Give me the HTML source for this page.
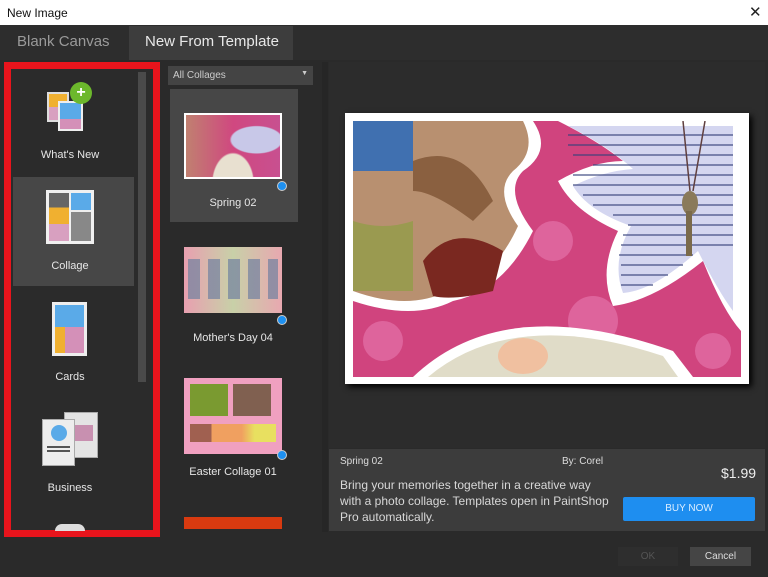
<!DOCTYPE html>
<html><head><style>
*{margin:0;padding:0;box-sizing:border-box}
body{width:768px;height:577px;background:#2a2a2a;font-family:"Liberation Sans",sans-serif;position:relative;overflow:hidden;color:#ddd}
.a{position:absolute}
.t{font-size:11px;color:#e6e6e6;text-align:center}
</style></head><body>
<div class="a" style="left:0;top:0;width:768px;height:25px;background:#fff"></div>
<div class="a" style="left:7px;top:6px;font-size:12px;color:#111">New Image</div>
<div class="a" style="left:749px;top:3px;font-size:15px;color:#222">✕</div>
<div class="a" style="left:0;top:25px;width:768px;height:35px;background:#2d2d2d"></div>
<div class="a" style="left:17px;top:33px;font-size:15px;color:#9a9a9a">Blank Canvas</div>
<div class="a" style="left:129px;top:26px;width:164px;height:34px;background:#3d3d3d"></div>
<div class="a" style="left:145px;top:33px;font-size:15px;color:#e8e8e8">New From Template</div>

<div class="a" style="left:4px;top:62px;width:156px;height:475px;border:7px solid #e8141c;background:#2b2b2b"></div>
<div class="a" style="left:138px;top:72px;width:8px;height:310px;background:#4a4a4a"></div>
<div class="a" style="left:47px;top:92px;width:22px;height:30px;background:#eee;border:2px solid #ddd"><div style="width:100%;height:100%;background:linear-gradient(#f0b030 50%,#d8a0c0 50%)"></div></div>
<div class="a" style="left:58px;top:101px;width:25px;height:30px;background:#eee;padding:2px"><div style="width:100%;height:60%;background:#5aaae8"></div><div style="width:100%;height:40%;background:#d490b8"></div></div>
<div class="a" style="left:70px;top:82px;width:22px;height:22px;border-radius:50%;background:#6cb82c;color:#fff;font-size:16px;line-height:22px;text-align:center;font-weight:bold">+</div>
<div class="a t" style="left:20px;top:149px;width:100px">What's New</div>
<div class="a" style="left:13px;top:177px;width:121px;height:109px;background:#474747"></div>
<div class="a" style="left:46px;top:190px;width:48px;height:54px;background:#f0f0f0;padding:3px;display:flex;gap:2px"><div style="flex:1;background:linear-gradient(#666 30%,#f0b030 30%,#f0b030 65%,#d8a0c0 65%)"></div><div style="flex:1;background:linear-gradient(#5aaae8 35%,#eee 35%,#eee 40%,#888 40%)"></div></div>
<div class="a t" style="left:20px;top:260px;width:100px">Collage</div>
<div class="a" style="left:52px;top:302px;width:35px;height:54px;background:#eee;padding:3px"><div style="height:45%;background:#5aaae8"></div><div style="height:55%;background:linear-gradient(90deg,#f0b030 35%,#d490b8 35%)"></div></div>
<div class="a t" style="left:20px;top:371px;width:100px">Cards</div>
<div class="a" style="left:64px;top:412px;width:34px;height:46px;background:#e4e4e4;border:1px solid #aaa"><div style="margin:12px 4px;height:16px;background:#c890b0"></div></div>
<div class="a" style="left:42px;top:419px;width:33px;height:47px;background:#ededed;border:1px solid #aaa"><div style="margin:5px 8px;width:16px;height:16px;border-radius:50%;background:#5aaae8"></div><div style="margin:2px 4px;height:8px;background:repeating-linear-gradient(#555 0 2px,#eee 2px 4px)"></div></div>
<div class="a t" style="left:20px;top:482px;width:100px">Business</div>
<div class="a" style="left:55px;top:524px;width:30px;height:7px;border-radius:15px 15px 0 0;background:#ddd"></div>

<div class="a" style="left:168px;top:66px;width:145px;height:19px;background:#444;font-size:10px;color:#ccc;padding:4px 5px">All Collages<span style="float:right;font-size:7px">▼</span></div>
<div class="a" style="left:170px;top:89px;width:128px;height:133px;background:#474747"></div>
<div class="a" style="left:184px;top:113px;width:98px;height:66px;background:#fff;padding:2px"><div style="width:100%;height:100%;background:radial-gradient(ellipse at 75% 40%,#c8c8e8 25%,transparent 27%),radial-gradient(ellipse at 50% 110%,#e8e0d0 30%,transparent 32%),linear-gradient(90deg,#c08070,#d04880 50%,#c85090)"></div></div>
<div class="a" style="left:277px;top:181px;width:10px;height:10px;border-radius:50%;background:#1e90f0;border:1px solid #ccc"></div>
<div class="a t" style="left:184px;top:197px;width:98px">Spring 02</div>
<div class="a" style="left:184px;top:247px;width:98px;height:66px;background:linear-gradient(90deg,#e8a0b0,#c8d0a8,#e8a8b0)"><div style="margin:12px 4px;height:40px;background:repeating-linear-gradient(90deg,#7080a0 0 12px,transparent 12px 20px);opacity:.7"></div></div>
<div class="a" style="left:277px;top:315px;width:10px;height:10px;border-radius:50%;background:#1e90f0;border:1px solid #ccc"></div>
<div class="a t" style="left:184px;top:332px;width:98px">Mother's Day 04</div>
<div class="a" style="left:184px;top:378px;width:98px;height:76px;background:#f0a0c0;padding:6px"><div style="display:flex;gap:5px"><div style="width:38px;height:32px;background:#7a9a30"></div><div style="width:38px;height:32px;background:#806050"></div></div><div style="margin-top:8px;height:18px;background:linear-gradient(90deg,#a06050 25%,#f0a060 25%,#f0a060 60%,#e8e060 75%)"></div></div>
<div class="a" style="left:277px;top:450px;width:10px;height:10px;border-radius:50%;background:#1e90f0;border:1px solid #ccc"></div>
<div class="a t" style="left:184px;top:466px;width:98px">Easter Collage 01</div>
<div class="a" style="left:184px;top:517px;width:98px;height:12px;background:#d83a10"></div>
<div class="a" style="left:322px;top:62px;width:6px;height:470px;background:#262626"></div>

<div class="a" style="left:329px;top:62px;width:436px;height:386px;background:#2c2c2c"></div>
<div class="a" style="left:345px;top:113px;width:404px;height:271px;background:#fff;box-shadow:3px 3px 6px #000"></div>
<svg class="a" style="left:353px;top:121px" width="388" height="256" viewBox="0 0 388 256">
<rect width="388" height="256" fill="#d0447e"/>
<g fill="#e87ab0" opacity=".6"><circle cx="200" cy="120" r="20"/><circle cx="240" cy="200" r="25"/><circle cx="30" cy="220" r="20"/><circle cx="360" cy="230" r="18"/></g>
<path d="M0 0H180Q200 30 170 50Q150 70 180 110Q150 170 100 180Q60 200 0 180Z" fill="#fff"/>
<path d="M0 0H170Q185 30 160 50Q140 70 165 105Q140 160 95 170Q55 190 0 170Z" fill="#b89070"/>
<path d="M0 0H60V50H0Z" fill="#4070b0"/>
<path d="M70 140Q100 100 150 130L140 170Q100 180 80 175Z" fill="#7a2820"/>
<path d="M60 40Q110 20 140 80L120 100Q80 70 60 70Z" fill="#8a6040"/>
<path d="M0 100Q30 110 60 100V170H0Z" fill="#9a9a50"/>
<path d="M205 0H388V210Q370 190 350 140Q300 180 260 185Q245 150 265 110Q220 90 205 60Q240 40 270 40Q245 20 205 0Z" fill="#fff"/>
<path d="M215 5H380V190Q365 170 345 130Q300 170 270 172Q258 140 278 105Q235 90 220 65Q250 50 280 48Q255 25 215 5Z" fill="#d4d6f0"/>
<g stroke="#34407a" stroke-width="1.5" opacity=".75"><path d="M215 14H380M215 24H380M220 34H380M240 44H380M220 54H380M220 64H380M230 74H380M240 84H380M260 94H380M275 104H380M270 114H380M268 124H380M266 134H340M268 144H330M268 154H315M268 164H300"/></g>
<path d="M330 0L337 70M352 0L340 70" stroke="#604040" stroke-width="1.5" fill="none"/>
<ellipse cx="337" cy="82" rx="8" ry="12" fill="#8a7a5a"/><rect x="333" y="90" width="6" height="45" fill="#7a6a4a"/>
<path d="M60 256Q150 170 320 230L340 256Z" fill="#fff"/>
<path d="M75 256Q160 185 310 235L325 256Z" fill="#e0dcc8"/>
<ellipse cx="170" cy="235" rx="25" ry="18" fill="#f0c0a0"/>
</svg>

<div class="a" style="left:329px;top:449px;width:436px;height:82px;background:#3c3c3c"></div>
<div class="a" style="left:340px;top:456px;font-size:10px;color:#ddd">Spring 02</div>
<div class="a" style="left:562px;top:456px;font-size:10px;color:#ddd">By: Corel</div>
<div class="a" style="left:721px;top:465px;font-size:14px;color:#eee">$1.99</div>
<div class="a" style="left:340px;top:477px;white-space:nowrap;font-size:12px;line-height:16px;color:#d8d8d8">Bring your memories together in a creative way<br>with a photo collage. Templates open in PaintShop<br>Pro automatically.</div>
<div class="a" style="left:623px;top:497px;width:132px;height:24px;background:#1e8ef0;border-radius:2px;color:#dceeff;font-size:10px;text-align:center;line-height:24px">BUY NOW</div>

<div class="a" style="left:618px;top:547px;width:60px;height:19px;background:#2e2e2e;color:#555;font-size:10px;text-align:center;line-height:19px">OK</div>
<div class="a" style="left:690px;top:547px;width:61px;height:19px;background:#454545;color:#ddd;font-size:10px;text-align:center;line-height:19px">Cancel</div>
</body></html>
